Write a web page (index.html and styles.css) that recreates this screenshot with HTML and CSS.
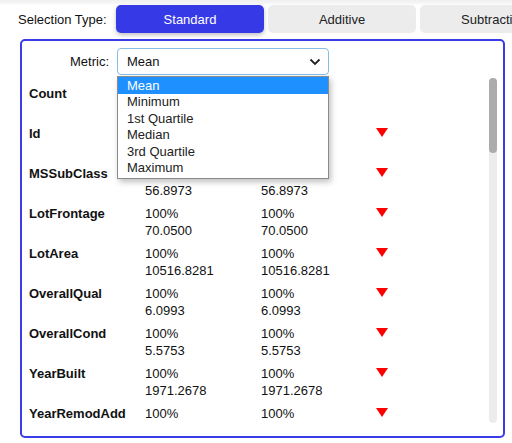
FILE: index.html
```html
<!DOCTYPE html>
<html>
<head>
<meta charset="utf-8">
<link rel="stylesheet" href="styles.css">
</head>
<body>
<div class="topbar">
  <span class="sel-label">Selection Type:</span>
  <button class="mode active">Standard</button>
  <button class="mode">Additive</button>
  <button class="mode">Subtraction</button>
</div>
<div class="panel">
  <div class="metric-row">
    <span class="metric-label">Metric:</span>
    <div class="select">
      <span class="select-value">Mean</span>
      <svg class="chev" width="12" height="8" viewBox="0 0 12 8"><path d="M1.5 1.5 L6 6 L10.5 1.5" fill="none" stroke="#222" stroke-width="1.8"/></svg>
      <div class="dropdown">
        <div class="opt hl">Mean</div>
        <div class="opt">Minimum</div>
        <div class="opt">1st Quartile</div>
        <div class="opt">Median</div>
        <div class="opt">3rd Quartile</div>
        <div class="opt">Maximum</div>
      </div>
    </div>
  </div>
  <div class="body">
    <div class="list">
      <div class="row"><span class="name">Count</span><span class="val">1460<br>&nbsp;</span><span class="val">1460<br>&nbsp;</span><span></span></div>
      <div class="row"><span class="name">Id</span><span class="val">100%<br>730.5000</span><span class="val">100%<br>730.5000</span><span class="tri"></span></div>
      <div class="row"><span class="name">MSSubClass</span><span class="val">100%<br>56.8973</span><span class="val">100%<br>56.8973</span><span class="tri"></span></div>
      <div class="row"><span class="name">LotFrontage</span><span class="val">100%<br>70.0500</span><span class="val">100%<br>70.0500</span><span class="tri"></span></div>
      <div class="row"><span class="name">LotArea</span><span class="val">100%<br>10516.8281</span><span class="val">100%<br>10516.8281</span><span class="tri"></span></div>
      <div class="row"><span class="name">OverallQual</span><span class="val">100%<br>6.0993</span><span class="val">100%<br>6.0993</span><span class="tri"></span></div>
      <div class="row"><span class="name">OverallCond</span><span class="val">100%<br>5.5753</span><span class="val">100%<br>5.5753</span><span class="tri"></span></div>
      <div class="row"><span class="name">YearBuilt</span><span class="val">100%<br>1971.2678</span><span class="val">100%<br>1971.2678</span><span class="tri"></span></div>
      <div class="row"><span class="name">YearRemodAdd</span><span class="val">100%<br>1984.8658</span><span class="val">100%<br>1984.8658</span><span class="tri"></span></div>
    </div>
    <div class="track"><div class="thumb"></div></div>
  </div>
</div>
</body>
</html>
```
FILE: styles.css
```css
html, body {
  margin: 0;
  padding: 0;
  width: 512px;
  height: 443px;
  overflow: hidden;
  background: #fff;
  font-family: "Liberation Sans", Arial, sans-serif;
  font-size: 13px;
  color: #111;
}
.topbar {
  display: flex;
  align-items: center;
  height: 35px;
  padding: 3px 0 0 18px;
  box-sizing: border-box;
  background: linear-gradient(#efefef 0, #f6f6f6 3px, #fff 5px);
  white-space: nowrap;
}
.sel-label {
  width: 98px;
  flex: none;
}
.mode {
  flex: none;
  width: 148px;
  height: 28px;
  margin-right: 4px;
  border: none;
  border-radius: 5px;
  background: #ececec;
  color: #222;
  font-family: inherit;
  font-size: 13px;
  padding: 0;
}
.mode.active {
  background: #3539e6;
  color: #fff;
  box-shadow: 0 2px 4px rgba(0,0,0,0.25);
}
.panel {
  margin: 4px 0 0 20px;
  width: 485px;
  height: 399px;
  box-sizing: border-box;
  border: 2px solid #3a3ce8;
  border-radius: 5px;
  display: flex;
  flex-direction: column;
}
.metric-row {
  display: flex;
  align-items: center;
  padding-top: 7px;
  height: 27px;
  flex: none;
}
.metric-label {
  width: 87px;
  text-align: right;
  padding-right: 8px;
}
.select {
  position: relative;
  width: 212px;
  height: 27px;
  box-sizing: border-box;
  border: 1px solid #86bde8;
  border-radius: 4px;
  display: flex;
  align-items: center;
  justify-content: space-between;
  padding: 0 7px 0 9px;
}
.chev { display: block; }
.dropdown {
  position: absolute;
  top: 27px;
  left: -1px;
  width: 212px;
  box-sizing: border-box;
  border: 1px solid #8a8a8a;
  background: #fff;
  box-shadow: 2px 3px 6px rgba(0,0,0,0.25);
  z-index: 5;
  padding-bottom: 1px;
}
.opt {
  height: 16.5px;
  line-height: 16.5px;
  padding-left: 9px;
  color: #222;
}
.opt.hl {
  background: #1e90ff;
  color: #fff;
  height: 17px;
  line-height: 17px;
}
.body {
  flex: 1;
  display: flex;
  margin-top: 2px;
  min-height: 0;
  padding-bottom: 12px;
}
.list {
  flex: 1;
  overflow: hidden;
  padding: 7.5px 0 0 7px;
}
.row {
  display: grid;
  grid-template-columns: 116px 116px 115px 12px;
  line-height: 17px;
  height: 34px;
  margin-bottom: 6px;
}
.name { font-weight: bold; color: #111; }
.tri {
  width: 0;
  height: 0;
  margin-top: 3.5px;
  border-left: 6px solid transparent;
  border-right: 6px solid transparent;
  border-top: 9px solid #ff0000;
}
.track {
  width: 8px;
  margin: 1px 6px 1px 0;
  background: #ececec;
  border-radius: 4px;
  flex: none;
}
.thumb {
  height: 75px;
  background: #acacac;
  border-radius: 4px;
}
```
